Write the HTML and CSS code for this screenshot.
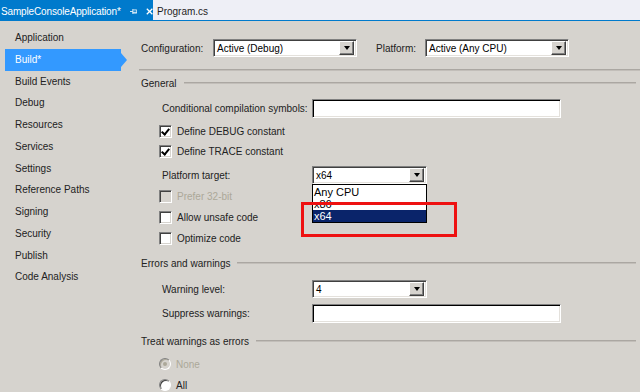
FILE: index.html
```html
<!DOCTYPE html>
<html>
<head>
<meta charset="utf-8">
<link rel="stylesheet" href="styles.css">
</head>
<body>
<div class="tabbar">
  <div class="tab active">
    <span class="tab-title">SampleConsoleApplication*</span>
    <svg class="pin" width="9" height="9" viewBox="0 0 9 9"><path d="M0 4.5H3.5M3.5 1.5V7.5M3.5 2.5H8.5V6.5H3.5M3.5 5.5H8.5" stroke="#fff" stroke-width="1" fill="none"/></svg>
    <svg class="close" width="9" height="9" viewBox="0 0 9 9"><path d="M1 1L8 8M8 1L1 8" stroke="#fff" stroke-width="1.6" fill="none"/></svg>
  </div>
  <div class="tab">Program.cs</div>
</div>
<div class="main">
  <nav class="sidebar">
    <div class="nav-item">Application</div>
    <div class="nav-item selected">Build*</div>
    <div class="nav-item">Build Events</div>
    <div class="nav-item">Debug</div>
    <div class="nav-item">Resources</div>
    <div class="nav-item">Services</div>
    <div class="nav-item">Settings</div>
    <div class="nav-item">Reference Paths</div>
    <div class="nav-item">Signing</div>
    <div class="nav-item">Security</div>
    <div class="nav-item">Publish</div>
    <div class="nav-item">Code Analysis</div>
  </nav>
  <section class="content">
    <div class="config-row">
      <span class="config-label">Configuration:</span>
      <div class="combo wide"><span class="combo-text">Active (Debug)</span><span class="combo-btn"><i></i></span></div>
      <span class="platform-label">Platform:</span>
      <div class="combo wide"><span class="combo-text">Active (Any CPU)</span><span class="combo-btn"><i></i></span></div>
    </div>
    <div class="rule full"></div>

    <div class="heading h-general"><span>General</span><div class="rule"></div></div>

    <div class="field-row r-cond">
      <span class="field-label">Conditional compilation symbols:</span>
      <div class="textbox"></div>
    </div>
    <div class="check-row r-debug"><span class="checkbox checked"></span><span>Define DEBUG constant</span></div>
    <div class="check-row r-trace"><span class="checkbox checked"></span><span>Define TRACE constant</span></div>
    <div class="field-row r-platform">
      <span class="field-label">Platform target:</span>
      <div class="combo-wrap">
        <div class="combo narrow"><span class="combo-text">x64</span><span class="combo-btn"><i></i></span></div>
        <div class="droplist">
          <div class="drop-item">Any CPU</div>
          <div class="drop-item">x86</div>
          <div class="drop-item hl">x64</div>
        </div>
        <div class="redbox"></div>
      </div>
    </div>
    <div class="check-row r-prefer disabled"><span class="checkbox"></span><span>Prefer 32-bit</span></div>
    <div class="check-row r-allow"><span class="checkbox"></span><span>Allow unsafe code</span></div>
    <div class="check-row r-opt"><span class="checkbox"></span><span>Optimize code</span></div>

    <div class="heading h-errors"><span>Errors and warnings</span><div class="rule"></div></div>

    <div class="field-row r-warn">
      <span class="field-label">Warning level:</span>
      <div class="combo narrow"><span class="combo-text">4</span><span class="combo-btn"><i></i></span></div>
    </div>
    <div class="field-row r-suppress">
      <span class="field-label">Suppress warnings:</span>
      <div class="textbox"></div>
    </div>

    <div class="heading h-treat"><span>Treat warnings as errors</span><div class="rule"></div></div>

    <div class="check-row r-none disabled"><span class="radio dot"></span><span>None</span></div>
    <div class="check-row r-all"><span class="radio"></span><span>All</span></div>
  </section>
</div>
</body>
</html>
```
FILE: styles.css
```css
* { box-sizing: border-box; }
html, body {
  margin: 0;
  padding: 0;
  width: 640px;
  height: 392px;
  overflow: hidden;
  background: #d6d3ce;
  font-family: "Liberation Sans", Arial, sans-serif;
  font-size: 10px;
  color: #222;
}
.tabbar {
  height: 21px;
  background: #eeeff6;
  border-bottom: 1px solid #007acc;
  display: flex;
  align-items: stretch;
}
.tab {
  display: flex;
  align-items: center;
  padding: 2px 0 0 4px;
  color: #1e1e1e;
  font-size: 10px;
}
.tab.active {
  background: #007acc;
  color: #fff;
  width: 153px;
  padding-left: 1px;
}
.tab-title { letter-spacing: -0.15px; }
.pin { margin-left: 9px; }
.close { margin-left: 9px; }

.main { display: flex; }
.sidebar {
  width: 140px;
  flex: none;
  padding-top: 6px;
}
.nav-item {
  height: 21.75px;
  line-height: 21.75px;
  padding-left: 15px;
  white-space: nowrap;
}
.nav-item.selected {
  position: relative;
  margin-left: 5px;
  width: 116px;
  padding-left: 10px;
  background: #3399ff;
  color: #fff;
}
.nav-item.selected::after {
  content: "";
  position: absolute;
  right: -6px;
  top: 4px;
  border-left: 6px solid #3399ff;
  border-top: 7px solid transparent;
  border-bottom: 7px solid transparent;
}

.content {
  flex: 1;
  display: flex;
  flex-direction: column;
  padding-top: 18px;
}
.config-row {
  display: flex;
  align-items: center;
  height: 18px;
  padding-left: 1px;
}
.config-label { width: 72px; }
.platform-label { margin-left: 19px; width: 49px; }

.rule {
  height: 2px;
  border-top: 1px solid #aba7a2;
  border-bottom: 1px solid #c2beb9;
}
.rule.full { margin-top: 12px; margin-left: -1px; }

.heading {
  display: flex;
  align-items: center;
  height: 14px;
  padding-left: 1px;
  padding-right: 4px;
}
.heading .rule { flex: 1; margin-left: 7px; }
.h-general { margin-top: 5px; }
.h-errors { margin-top: 8px; }
.h-treat { margin-top: 11px; }

.field-row {
  display: flex;
  align-items: center;
  padding-left: 22px;
}
.field-label { width: 150px; }
.r-cond { margin-top: 9px; height: 19px; }
.r-platform { margin-top: 5px; height: 18px; }
.r-warn { margin-top: 10px; height: 18px; }
.r-suppress { margin-top: 6px; height: 19px; }

.check-row {
  display: flex;
  align-items: center;
  height: 20px;
  padding-left: 19px;
}
.check-row > span:last-child { margin-left: 5px; }
.r-debug { margin-top: 3px; }
.r-trace { margin-top: 0; }
.r-prefer { margin-top: 2px; }
.r-allow { margin-top: 1px; }
.r-opt { margin-top: 1px; }
.r-none { margin-top: 7px; height: 18px; }
.r-all { margin-top: 3px; height: 18px; }
.disabled { color: #aca899; }

.combo {
  display: flex;
  align-items: center;
  height: 18px;
  background: #fff;
  border: 1px solid;
  border-color: #808080 #fff #fff #808080;
  box-shadow: inset 1px 1px 0 #404040, inset -1px -1px 0 #e4e1dc;
  color: #000;
}
.combo.wide { width: 144px; }
.combo.narrow { width: 115px; }
.combo-text { flex: 1; padding-left: 3px; padding-top: 1px; }
.combo-btn {
  width: 15px;
  height: 14px;
  margin-right: 2px;
  background: #d6d3ce;
  border: 1px solid;
  border-color: #fff #404040 #404040 #fff;
  box-shadow: inset -1px -1px 0 #808080;
  display: flex;
  align-items: center;
  justify-content: center;
}
.combo-btn i {
  display: block;
  width: 0;
  height: 0;
  border-top: 4px solid #000;
  border-left: 3.5px solid transparent;
  border-right: 3.5px solid transparent;
}

.textbox {
  width: 249px;
  height: 19px;
  background: #fff;
  border: 1px solid;
  border-color: #808080 #fff #fff #808080;
  box-shadow: inset 1px 1px 0 #000, inset -1px -1px 0 #e4e1dc;
}

.combo-wrap { position: relative; }
.droplist {
  position: absolute;
  left: 0;
  top: 18px;
  width: 115px;
  height: 39px;
  background: #fff;
  border: 1px solid #000;
  padding-top: 1px;
  font-size: 11px;
  color: #000;
}
.drop-item {
  height: 12px;
  line-height: 12px;
  padding-left: 1px;
}
.drop-item.hl {
  background: #0a246a;
  color: #fff;
}
.redbox {
  position: absolute;
  left: -11px;
  top: 36px;
  width: 156px;
  height: 35px;
  border: 3px solid #ee1111;
}

.checkbox {
  width: 13px;
  height: 13px;
  flex: none;
  position: relative;
  background: #fff;
  border: 1px solid;
  border-color: #808080 #fff #fff #808080;
  box-shadow: inset 1px 1px 0 #404040, inset -1px -1px 0 #d6d3ce;
}
.disabled .checkbox { background: #d6d3ce; }
.checkbox.checked::after {
  content: "";
  position: absolute;
  left: 3px;
  top: 1px;
  width: 3px;
  height: 6px;
  border-right: 2px solid #000;
  border-bottom: 2px solid #000;
  transform: rotate(40deg);
}
.radio {
  width: 12px;
  height: 12px;
  flex: none;
  border-radius: 50%;
  background: #fff;
  border: 1px solid;
  border-color: #808080 #fff #fff #808080;
  box-shadow: inset 1px 1px 0 #404040;
  position: relative;
}
.disabled .radio { background: #d6d3ce; box-shadow: inset 1px 1px 0 #aca899; }
.radio.dot::after {
  content: "";
  position: absolute;
  left: 3px;
  top: 3px;
  width: 4px;
  height: 4px;
  border-radius: 50%;
  background: #aca899;
}
```
